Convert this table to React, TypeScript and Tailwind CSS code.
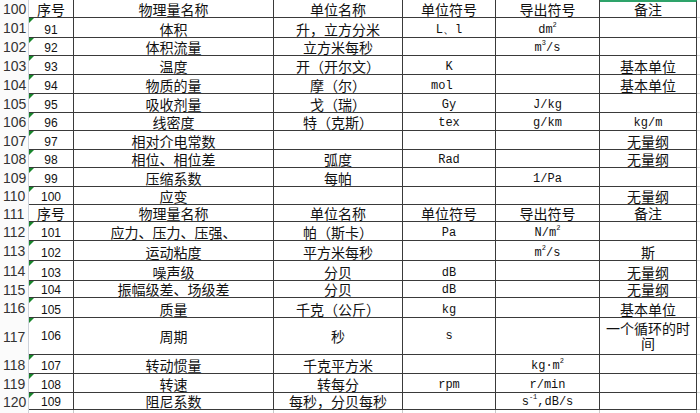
import React from 'react';

type Row = {
  n: string;
  h: string;
  cells: React.ReactNode[];
  header?: boolean;
  tall?: boolean;
};

const cols = 'grid grid-cols-[29px_45px_200px_129px_93px_104px_97px_3px]';
const line = 'border-[#3a3a3a]';
const cjk = "font-['Noto_Sans_CJK_SC','Noto_Sans',sans-serif] text-[14px] leading-[15px]";
const mono = "font-['Liberation_Mono','DejaVu_Sans_Mono',monospace] text-[12px] leading-[12px] pb-[1px]";
const num = "font-['Liberation_Sans',Arial,sans-serif] text-[12px] leading-[14px]";

const Sup = ({ children }: { children: React.ReactNode }) => (
  <sup className="text-[7px] -top-[6px]">{children}</sup>
);

const head = ['序号', '物理量名称', '单位名称', '单位符号', '导出符号', '备注'];

const rows: Row[] = [
  { n: '100', h: 'h-[18px]', cells: head, header: true },
  { n: '101', h: 'h-[20px]', cells: ['91', '体积', '升，立方分米', 'L、l', <>dm<Sup>2</Sup></>, ''] },
  { n: '102', h: 'h-[18px]', cells: ['92', '体积流量', '立方米每秒', '', <>m<Sup>3</Sup>/s</>, ''] },
  { n: '103', h: 'h-[19px]', cells: ['93', '温度', '开（开尔文）', 'K', '', '基本单位'] },
  { n: '104', h: 'h-[19px]', cells: ['94', '物质的量', '摩（尔）', 'mol\u00a0\u00a0', '', '基本单位'] },
  { n: '105', h: 'h-[19px]', cells: ['95', '吸收剂量', '戈（瑞）', 'Gy', 'J/kg', ''] },
  { n: '106', h: 'h-[18px]', cells: ['96', '线密度', '特（克斯）', 'tex', 'g/km', 'kg/m'] },
  { n: '107', h: 'h-[19px]', cells: ['97', '相对介电常数', '', '', '', '无量纲'] },
  { n: '108', h: 'h-[18px]', cells: ['98', '相位、相位差', '弧度', 'Rad', '', '无量纲'] },
  { n: '109', h: 'h-[19px]', cells: ['99', '压缩系数', '每帕', '', '1/Pa', ''] },
  { n: '110', h: 'h-[18px]', cells: ['100', '应变', '', '', '', '无量纲'] },
  { n: '111', h: 'h-[17px]', cells: head, header: true },
  { n: '112', h: 'h-[19px]', cells: ['101', '应力、压力、压强、', '帕（斯卡）', 'Pa', <>N/m<Sup>2</Sup></>, ''] },
  { n: '113', h: 'h-[20px]', cells: ['102', '运动粘度', '平方米每秒', '', <>m<Sup>2</Sup>/s</>, '斯'] },
  { n: '114', h: 'h-[20px]', cells: ['103', '噪声级', '分贝', 'dB', '', '无量纲'] },
  { n: '115', h: 'h-[17px]', cells: ['104', '振幅级差、场级差', '分贝', 'dB', '', '无量纲'] },
  { n: '116', h: 'h-[20px]', cells: ['105', '质量', '千克（公斤）', 'kg', '', '基本单位'] },
  { n: '117', h: 'h-[37px]', cells: ['106', '周期', '秒', 's', '', '一个循环的时间'], tall: true },
  { n: '118', h: 'h-[19px]', cells: ['107', '转动惯量', '千克平方米', '', <>kg·m<Sup>2</Sup></>, ''] },
  { n: '119', h: 'h-[19px]', cells: ['108', '转速', '转每分', 'rpm', 'r/min', ''] },
  { n: '120', h: 'h-[17px]', cells: ['109', '阻尼系数', '每秒，分贝每秒', '', <>s<Sup>-1</Sup>,dB/s</>, ''] },
];

function fontFor(c: React.ReactNode, col: number, header?: boolean) {
  if (header) return cjk;
  if (col === 0) return num;
  if (col === 4) return mono;
  if (typeof c === 'string' && /^[\x00-\x7f\u00a0]+$/.test(c)) return mono;
  if (col === 3) return mono;
  return cjk;
}

function SheetRow({ row }: { row: Row }) {
  const align = row.tall ? 'items-center' : 'items-end';
  return (
    <div className={`${cols} ${row.h}`}>
      <div className="flex items-center pl-[3px] border-r border-[#cdd2da] bg-[#fbfbfb] text-[#333] font-['Liberation_Sans',Arial,sans-serif] text-[14px] leading-[16px]">
        {row.n}
      </div>
      {row.cells.map((c, i) => (
        <div
          key={i}
          className={`relative flex ${align} justify-center text-center border-b border-r ${line} text-[#111] ${
            i === 5 && row.n === '100' ? 'border-t-2 border-t-[#2ea36a]' : ''
          }`}
        >
          {i === 0 && !row.header && (
            <span className="absolute left-0 top-0 w-0 h-0 border-t-[5px] border-r-[5px] border-t-[#18852c] border-r-transparent" />
          )}
          <span className={`px-[2px] ${fontFor(c, i, row.header)}`}>{c}</span>
        </div>
      ))}
      <div className="border-b border-[#d6d6d6]" />
    </div>
  );
}

export default function App() {
  return (
    <div className="w-[700px] h-[413px] overflow-hidden bg-white">
      {rows.map((r) => (
        <SheetRow key={r.n} row={r} />
      ))}
      <div className={`${cols} h-[3px]`}>
        <div className="border-r border-[#cdd2da] bg-[#fbfbfb]" />
        <div className="border-r border-dashed border-[#c8c8c8]" />
        <div className="border-r border-dashed border-[#c8c8c8]" />
        <div className="border-r border-dashed border-[#c8c8c8]" />
        <div className="border-r border-dashed border-[#c8c8c8]" />
        <div className="border-r border-dashed border-[#c8c8c8]" />
        <div className="border-r border-dashed border-[#c8c8c8]" />
        <div />
      </div>
    </div>
  );
}
